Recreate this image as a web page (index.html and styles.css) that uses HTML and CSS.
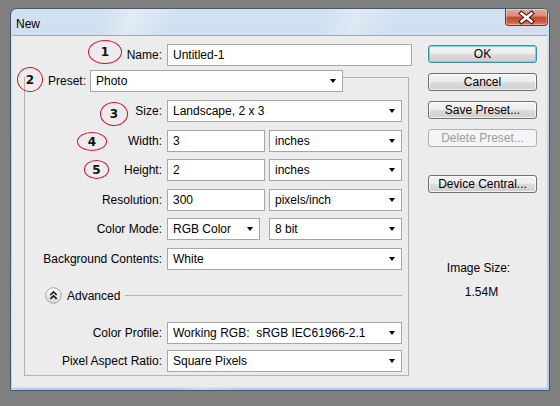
FILE: index.html
```html
<!DOCTYPE html>
<html>
<head>
<meta charset="utf-8">
<title>New</title>
<link rel="stylesheet" href="styles.css">
</head>
<body>
<div class="window">
  <div class="titlebar">
    <span class="title">New</span>
    <div class="close">
      <svg width="41" height="15" viewBox="0 0 41 15">
        <path d="M15.5 3.5 L25.5 11.5 M25.5 3.5 L15.5 11.5" stroke="#4a1810" stroke-width="4.6" stroke-linecap="square" fill="none"/>
        <path d="M15.5 3.5 L25.5 11.5 M25.5 3.5 L15.5 11.5" stroke="#ffffff" stroke-width="2.4" stroke-linecap="square" fill="none"/>
      </svg>
    </div>
  </div>
  <div class="client">
    <div class="main">
      <div class="row name-row">
        <span class="lbl lbl-top">Name:</span>
        <div class="field w-name">Untitled-1</div>
      </div>
      <fieldset class="group">
        <legend class="preset">
          <div class="preset-in">
            <span class="lbl lbl-preset">Preset:</span>
            <div class="select w-preset"><span>Photo</span><i class="arrow"></i></div>
          </div>
        </legend>
        <div class="rows">
          <div class="row">
            <span class="lbl">Size:</span>
            <div class="select w-full"><span>Landscape, 2 x 3</span><i class="arrow"></i></div>
          </div>
          <div class="row">
            <span class="lbl">Width:</span>
            <div class="field w-num">3</div>
            <div class="select w-unit"><span>inches</span><i class="arrow"></i></div>
          </div>
          <div class="row">
            <span class="lbl">Height:</span>
            <div class="field w-num">2</div>
            <div class="select w-unit"><span>inches</span><i class="arrow"></i></div>
          </div>
          <div class="row">
            <span class="lbl">Resolution:</span>
            <div class="field w-num">300</div>
            <div class="select w-unit"><span>pixels/inch</span><i class="arrow"></i></div>
          </div>
          <div class="row">
            <span class="lbl">Color Mode:</span>
            <div class="select w-mode"><span>RGB Color</span><i class="arrow"></i></div>
            <div class="select w-unit"><span>8 bit</span><i class="arrow"></i></div>
          </div>
          <div class="row">
            <span class="lbl">Background Contents:</span>
            <div class="select w-full"><span>White</span><i class="arrow"></i></div>
          </div>
        </div>
        <div class="advanced">
          <span class="adv-icon">
            <svg width="17" height="17" viewBox="0 0 17 17">
              <defs>
                <linearGradient id="ag" x1="0" y1="0" x2="0" y2="1">
                  <stop offset="0" stop-color="#ffffff"/>
                  <stop offset="1" stop-color="#d6d6d6"/>
                </linearGradient>
              </defs>
              <circle cx="8.5" cy="8.5" r="7.8" fill="url(#ag)" stroke="#a4a4a4" stroke-width="1"/>
              <path d="M5.3 8 L8.5 5 L11.7 8 M5.3 11.8 L8.5 8.8 L11.7 11.8" stroke="#1a1a1a" stroke-width="1.7" fill="none"/>
            </svg>
          </span>
          <span class="adv-text">Advanced</span>
          <span class="adv-line"></span>
        </div>
        <div class="rows rows-tight">
          <div class="row">
            <span class="lbl">Color Profile:</span>
            <div class="select w-full"><span class="pre">Working RGB:  sRGB IEC61966-2.1</span><i class="arrow"></i></div>
          </div>
          <div class="row">
            <span class="lbl">Pixel Aspect Ratio:</span>
            <div class="select w-full"><span>Square Pixels</span><i class="arrow"></i></div>
          </div>
        </div>
      </fieldset>
    </div>
    <div class="side">
      <div class="btn btn-default">OK</div>
      <div class="btn">Cancel</div>
      <div class="btn">Save Preset...</div>
      <div class="btn btn-disabled">Delete Preset...</div>
      <div class="btn btn-sep">Device Central...</div>
      <div class="imgsize">Image Size:</div>
      <div class="imgsize-val">1.54M</div>
    </div>
    <span class="mark m1">1</span>
    <span class="mark m2">2</span>
    <span class="mark m3">3</span>
    <span class="mark m4">4</span>
    <span class="mark m5">5</span>
  </div>
</div>
</body>
</html>
```
FILE: styles.css
```css
* { box-sizing: border-box; }
html, body { margin: 0; padding: 0; }
body {
  width: 560px;
  height: 406px;
  overflow: hidden;
  background: #7f7f7f;
  padding: 8px 0 0 10px;
  font-family: "Liberation Sans", Arial, sans-serif;
  font-size: 12px;
  line-height: 14px;
  color: #000;
}
.window {
  width: 540px;
  height: 383px;
  border: 1px solid #46586b;
  border-radius: 7px 7px 1px 1px;
  background:
    linear-gradient(112deg, rgba(255,255,255,0) 0 14%, rgba(255,255,255,.35) 18%, rgba(255,255,255,0) 24%, rgba(255,255,255,0) 46%, rgba(255,255,255,.28) 50%, rgba(255,255,255,0) 56%, rgba(255,255,255,0) 100%),
    linear-gradient(180deg, #d3e2f1 0, #bcd2ea 40%, #b5cde7 100%);
  display: flex;
  flex-direction: column;
  overflow: hidden;
}
.titlebar {
  height: 26px;
  flex: none;
  display: flex;
  justify-content: space-between;
  align-items: flex-start;
  padding-left: 5px;
}
.title { padding-top: 8px; color: #000; }
.close {
  width: 43px;
  height: 17px;
  margin-right: 1px;
  border: 1px solid #70342a;
  border-top: none;
  border-radius: 0 0 4px 4px;
  background: linear-gradient(180deg, #e6aa9c 0, #d88a78 45%, #c24a30 50%, #cf5b3f 80%, #e0866a 100%);
  box-shadow: inset 0 0 0 1px rgba(255,255,255,.35);
  display: flex;
  align-items: center;
  justify-content: center;
}
.close svg { display: block; }
.client {
  flex: 1;
  margin: 0 2px 2px 1px;
  background: #ececec;
  box-shadow: inset 0 1px 0 #98abbd, inset 0 -1px 0 #d8e3ee;
  display: flex;
  position: relative;
}
.main {
  margin-left: 12px;
  width: 400px;
  padding-top: 9px;
  flex: none;
}
.row {
  display: flex;
  align-items: center;
  height: 22px;
}
.lbl {
  width: 137px;
  margin-right: 5px;
  text-align: right;
  white-space: nowrap;
  flex: none;
}
.lbl-top { width: 138px; }
.field, .select {
  height: 22px;
  border: 1px solid #a6a6a6;
  background: #fff;
  padding-left: 5px;
  display: flex;
  align-items: center;
  flex: none;
  white-space: nowrap;
}
.select {
  justify-content: space-between;
  padding-right: 6px;
}
.arrow {
  width: 0;
  height: 0;
  border-left: 3.5px solid transparent;
  border-right: 3.5px solid transparent;
  border-top: 4px solid #000;
  flex: none;
}
.pre { white-space: pre; }
.w-name { width: 245px; }
.w-preset { width: 253px; }
.w-full { width: 235px; }
.w-num { width: 98px; margin-right: 4px; }
.w-unit { width: 133px; }
.w-mode { width: 93px; margin-right: 9px; }
.group {
  margin: -3px 0 0 0;
  padding: 0 5px 3px 0;
  width: 385px;
  min-width: 0;
  border: 1px solid #b3b3b3;
}
.preset {
  padding: 7px 0 0 0;
  margin: 0;
}
.preset-in {
  display: flex;
  align-items: center;
  height: 22px;
}
.lbl-preset { width: 61px; margin-right: 4px; }
.rows {
  display: flex;
  flex-direction: column;
  gap: 7.5px;
  margin-top: 8px;
}
.rows-tight { gap: 6px; margin-top: 18px; }
.advanced {
  display: flex;
  align-items: center;
  height: 17px;
  margin-top: 17.5px;
  padding-left: 20px;
}
.adv-icon { width: 17px; height: 17px; flex: none; }
.adv-icon svg { display: block; }
.adv-text { margin-left: 5px; }
.adv-line {
  flex: 1;
  height: 1px;
  background: #b3b3b3;
  margin-left: 5px;
  margin-right: 1px;
}
.side {
  margin-left: 4px;
  width: 109px;
  padding-top: 10px;
  display: flex;
  flex-direction: column;
  flex: none;
}
.btn {
  height: 18px;
  margin-bottom: 10px;
  border: 1px solid #707070;
  border-radius: 3px;
  background: linear-gradient(180deg, #f4f4f4 0, #ececec 48%, #dcdcdc 52%, #cfcfcf 100%);
  box-shadow: inset 0 0 0 1px rgba(255,255,255,.7);
  text-align: center;
  line-height: 16px;
  color: #000;
}
.btn-default {
  border-color: #3c8fa8;
  box-shadow: inset 0 0 0 1px #6fd6e6;
}
.btn-disabled {
  border-color: #adb2b5;
  background: #f4f4f4;
  color: #9c9c9c;
  box-shadow: none;
}
.btn-sep { margin-top: 18px; }
.imgsize { margin-top: 58px; text-align: center; padding-right: 8px; }
.imgsize-val { margin-top: 10px; text-align: center; padding-right: 2px; }
.mark {
  position: absolute;
  border: 1px solid #d0103a;
  border-radius: 50%;
  display: flex;
  align-items: center;
  justify-content: center;
  font-family: "DejaVu Sans", sans-serif;
  font-weight: bold;
  font-size: 12px;
  line-height: 12px;
  color: #111;
}
.m1 { left: 76px; top: 5px; width: 34px; height: 24px; }
.m2 { left: 5px; top: 32px; width: 26px; height: 25px; }
.m3 { left: 88px; top: 67px; width: 28px; height: 24px; }
.m4 { left: 65px; top: 97px; width: 30px; height: 19px; }
.m5 { left: 72px; top: 125px; width: 25px; height: 19px; }
```
